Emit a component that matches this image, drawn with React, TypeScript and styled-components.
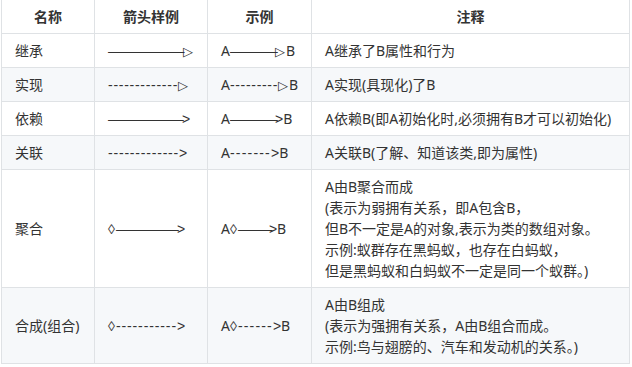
import React from 'react';
import styled, { createGlobalStyle } from 'styled-components';

const Global = createGlobalStyle`
  html, body { margin: 0; padding: 0; background: #ffffff; }
  body { font-family: "Noto Sans", "Noto Sans CJK SC", sans-serif; }
`;

const Page = styled.div`
  padding-left: 1px;
`;

const Table = styled.table`
  margin-top: -1px;
  border-collapse: collapse;
  table-layout: fixed;
  width: 628px;
  font-size: 14px;
  line-height: 21px;
  color: #333333;
`;

const HeadCell = styled.th`
  border: 1px solid #dfe2e5;
  padding: 6px 13px;
  font-weight: 700;
  text-align: center;
  vertical-align: middle;
  background: #ffffff;
`;

const Row = styled.tr<{ $alt: boolean }>`
  background: ${(p) => (p.$alt ? '#f6f8fa' : '#ffffff')};
`;

const Cell = styled.td`
  border: 1px solid #dfe2e5;
  padding: 6px 13px;
  text-align: left;
  vertical-align: middle;
`;

const Line = styled.div`
  display: block;
  height: 21px;
  line-height: 21px;
  white-space: nowrap;
  overflow: visible;
`;

const ArrowText = styled.span`
  font-family: "Liberation Sans", "DejaVu Sans", sans-serif;
  white-space: nowrap;
  color: #333333;
`;

const Shaft = styled.span<{ $ls: number }>`
  letter-spacing: ${(p) => p.$ls}px;
`;

const Diamond = styled.span`
  margin-right: 1px;
`;

const TriHead = styled.span`
  font-family: "DejaVu Sans", sans-serif;
  font-size: 13px;
  margin-right: 1px;
`;

type Kind = 'solid' | 'dashed';
type Spec = { kind: Kind; len: number; head: 'tri' | 'gt'; diamond?: boolean };

function Arrow({ kind, len, head, diamond }: Spec) {
  const ch = kind === 'solid' ? '—' : '-';
  const adv = kind === 'solid' ? 14 : 4.66;
  const count = kind === 'solid' ? Math.ceil(len / 14) : Math.round(len / 5.5);
  const ls = len / count - adv;
  return (
    <ArrowText>
      {diamond && <Diamond>◊</Diamond>}
      <Shaft $ls={ls}>{ch.repeat(count)}</Shaft>
      {head === 'tri' ? <TriHead>▷</TriHead> : '>'}
    </ArrowText>
  );
}

const rows: { name: string; sample: Spec; example: Spec; note: string[] }[] = [
  {
    name: '继承',
    sample: { kind: 'solid', len: 75, head: 'tri' },
    example: { kind: 'solid', len: 45, head: 'tri' },
    note: ['A继承了B属性和行为'],
  },
  {
    name: '实现',
    sample: { kind: 'dashed', len: 70, head: 'tri' },
    example: { kind: 'dashed', len: 48, head: 'tri' },
    note: ['A实现(具现化)了B'],
  },
  {
    name: '依赖',
    sample: { kind: 'solid', len: 74, head: 'gt' },
    example: { kind: 'solid', len: 45, head: 'gt' },
    note: ['A依赖B(即A初始化时,必须拥有B才可以初始化)'],
  },
  {
    name: '关联',
    sample: { kind: 'dashed', len: 71, head: 'gt' },
    example: { kind: 'dashed', len: 41, head: 'gt' },
    note: ['A关联B(了解、知道该类,即为属性)'],
  },
  {
    name: '聚合',
    sample: { kind: 'solid', len: 61, head: 'gt', diamond: true },
    example: { kind: 'solid', len: 31, head: 'gt', diamond: true },
    note: [
      'A由B聚合而成',
      '(表示为弱拥有关系，即A包含B，',
      '但B不一定是A的对象,表示为类的数组对象。',
      '示例:蚁群存在黑蚂蚁，也存在白蚂蚁，',
      '但是黑蚂蚁和白蚂蚁不一定是同一个蚁群。)',
    ],
  },
  {
    name: '合成(组合)',
    sample: { kind: 'dashed', len: 61, head: 'gt', diamond: true },
    example: { kind: 'dashed', len: 35, head: 'gt', diamond: true },
    note: ['A由B组成', '(表示为强拥有关系，A由B组合而成。', '示例:鸟与翅膀的、汽车和发动机的关系。)'],
  },
];

export default function App() {
  return (
    <Page>
      <Global />
      <Table>
        <colgroup>
          <col style={{ width: 93 }} />
          <col style={{ width: 113 }} />
          <col style={{ width: 104 }} />
          <col style={{ width: 318 }} />
        </colgroup>
        <thead>
          <tr>
            <HeadCell><Line>名称</Line></HeadCell>
            <HeadCell><Line>箭头样例</Line></HeadCell>
            <HeadCell><Line>示例</Line></HeadCell>
            <HeadCell><Line>注释</Line></HeadCell>
          </tr>
        </thead>
        <tbody>
          {rows.map((r, i) => (
            <Row key={r.name} $alt={i % 2 === 1}>
              <Cell><Line>{r.name}</Line></Cell>
              <Cell>
                <Line><Arrow {...r.sample} /></Line>
              </Cell>
              <Cell>
                <Line>A<Arrow {...r.example} />B</Line>
              </Cell>
              <Cell>
                {r.note.map((line, j) => (
                  <Line key={j}>{line}</Line>
                ))}
              </Cell>
            </Row>
          ))}
        </tbody>
      </Table>
    </Page>
  );
}
